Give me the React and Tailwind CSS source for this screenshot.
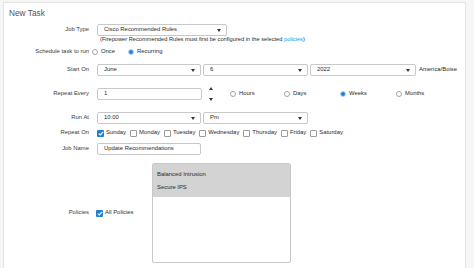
import React from 'react';

const Caret = () => (
  <svg width="4" height="3" viewBox="0 0 4 3" className="shrink-0">
    <polygon points="0,0 4,0 2,3" fill="#333" />
  </svg>
);

const Select = ({ value, width }) => (
  <div
    className={`flex items-center justify-between h-[12px] bg-white border border-[#c8c8c8] rounded-[2px] pl-[6px] pr-[5px] ${width}`}
  >
    <span className="text-[#2a2a2a]">{value}</span>
    <Caret />
  </div>
);

const Radio = ({ label, checked }) => (
  <div className="flex items-center gap-[3px]">
    {checked ? (
      <span className="w-[6px] h-[6px] rounded-full border border-[#a9cdef] bg-white flex items-center justify-center">
        <span className="w-[4px] h-[4px] rounded-full bg-[#1f7fd4]" />
      </span>
    ) : (
      <span className="w-[6px] h-[6px] rounded-full border border-[#a5a5a5] bg-white" />
    )}
    <span className="text-[#2a2a2a]">{label}</span>
  </div>
);

const Check = ({ label, checked }) => (
  <div className="flex items-center gap-[2px]">
    {checked ? (
      <span className="w-[7px] h-[7px] rounded-[1px] bg-[#1f7fd4] flex items-center justify-center">
        <svg width="6" height="5" viewBox="0 0 6 5">
          <polyline points="0.8,2.6 2.3,4 5.2,0.9" fill="none" stroke="#fff" strokeWidth="1.1" />
        </svg>
      </span>
    ) : (
      <span className="w-[7px] h-[7px] rounded-[1px] border border-[#9b9b9b] bg-white" />
    )}
    <span className="text-[#2a2a2a]">{label}</span>
  </div>
);

const Label = ({ children }) => (
  <div className="w-[85px] shrink-0 text-right text-[#3a3a3a]">{children}</div>
);

const days = ['Sunday', 'Monday', 'Tuesday', 'Wednesday', 'Thursday', 'Friday', 'Saturday'];

export default function App() {
  return (
    <div
      className="w-[474px] h-[268px] overflow-hidden bg-[#f6f6f6] pt-[2px] pl-[3px] text-[5.9px] leading-none"
      style={{ fontFamily: '"Liberation Sans", Arial, sans-serif' }}
    >
      <div className="w-[463px] h-[280px] bg-white border border-[#e4e4e4]">
        <div className="h-[20px] leading-[20px] pl-[5px] text-[8.3px] text-[#555]">New Task</div>

        {/* Job Type */}
        <div className="flex items-center gap-[8px] mt-[1px] h-[12px]">
          <Label>Job Type</Label>
          <Select value="Cisco Recommended Rules" width="w-[130px]" />
        </div>
        <div className="mt-[1px] h-[6px] flex items-center pl-[96px] text-[5.7px] text-[#2a2a2a]">
          (Firepower Recommended Rules must first be configured in the selected&nbsp;
          <span className="text-[#049fd9]">policies</span>)
        </div>

        {/* Schedule */}
        <div className="flex items-center gap-[4px] mt-[4px] h-[10px]">
          <Label>Schedule task to run</Label>
          <div className="flex items-center gap-[13px] ml-[-1px]">
            <Radio label="Once" />
            <Radio label="Recurring" checked />
          </div>
        </div>

        {/* Start On */}
        <div className="flex items-center gap-[8px] mt-[7px] h-[12px]">
          <Label>Start On</Label>
          <div className="flex items-center gap-[2px]">
            <Select value="June" width="w-[104px]" />
            <Select value="6" width="w-[105px]" />
            <Select value="2022" width="w-[106px]" />
            <span className="ml-[1px] text-[#2a2a2a]">America/Boise</span>
          </div>
        </div>

        {/* Repeat Every */}
        <div className="flex items-center gap-[8px] mt-[8px] h-[20px]">
          <Label>Repeat Every</Label>
          <div className="flex items-center">
            <div className="w-[105px] h-[12px] flex items-center bg-white border border-[#c8c8c8] rounded-[2px] pl-[6px] text-[#2a2a2a]">
              1
            </div>
            <div className="ml-[7px] flex flex-col items-center justify-between h-[14px]">
              <svg width="4" height="3" viewBox="0 0 4 3">
                <polygon points="0,3 4,3 2,0" fill="#333" />
              </svg>
              <svg width="4" height="3" viewBox="0 0 4 3">
                <polygon points="0,0 4,0 2,3" fill="#333" />
              </svg>
            </div>
            <div className="ml-[17px] flex items-center">
              <div className="w-[54px]"><Radio label="Hours" /></div>
              <div className="w-[56px]"><Radio label="Days" /></div>
              <div className="w-[56px]"><Radio label="Weeks" checked /></div>
              <div className="w-[56px]"><Radio label="Months" /></div>
            </div>
          </div>
        </div>

        {/* Run At */}
        <div className="flex items-center gap-[8px] mt-[8px] h-[12px]">
          <Label>Run At</Label>
          <div className="flex items-center gap-[2px]">
            <Select value="10:00" width="w-[104px]" />
            <Select value="Pm" width="w-[105px]" />
          </div>
        </div>

        {/* Repeat On */}
        <div className="flex items-center gap-[8px] mt-[4px] h-[10px]">
          <Label>Repeat On</Label>
          <div className="flex items-center gap-[4px]">
            {days.map((d, i) => (
              <Check key={d} label={d} checked={i === 0} />
            ))}
          </div>
        </div>

        {/* Job Name */}
        <div className="flex items-center gap-[8px] mt-[5px] h-[12px]">
          <Label>Job Name</Label>
          <div className="w-[104px] h-[12px] flex items-center bg-white border border-[#c8c8c8] rounded-[2px] pl-[6px] text-[#2a2a2a]">
            Update Recommendations
          </div>
        </div>

        {/* Policies */}
        <div className="flex items-center mt-[8px] h-[100px]">
          <Label>Policies</Label>
          <div className="ml-[7px] w-[56px] flex items-center">
            <Check label="All Policies" checked />
          </div>
          <div className="w-[139px] h-[100px] border border-[#c8c8c8] rounded-[2px] bg-white overflow-hidden">
            <div className="bg-[#d3d3d3] pt-[4px] pb-[3px]">
              <div className="h-[13px] flex items-center pl-[4px] text-[#2a2a2a]">Balanced Intrusion</div>
              <div className="h-[13px] flex items-center pl-[4px] text-[#2a2a2a]">Secure IPS</div>
            </div>
          </div>
        </div>
      </div>
    </div>
  );
}
